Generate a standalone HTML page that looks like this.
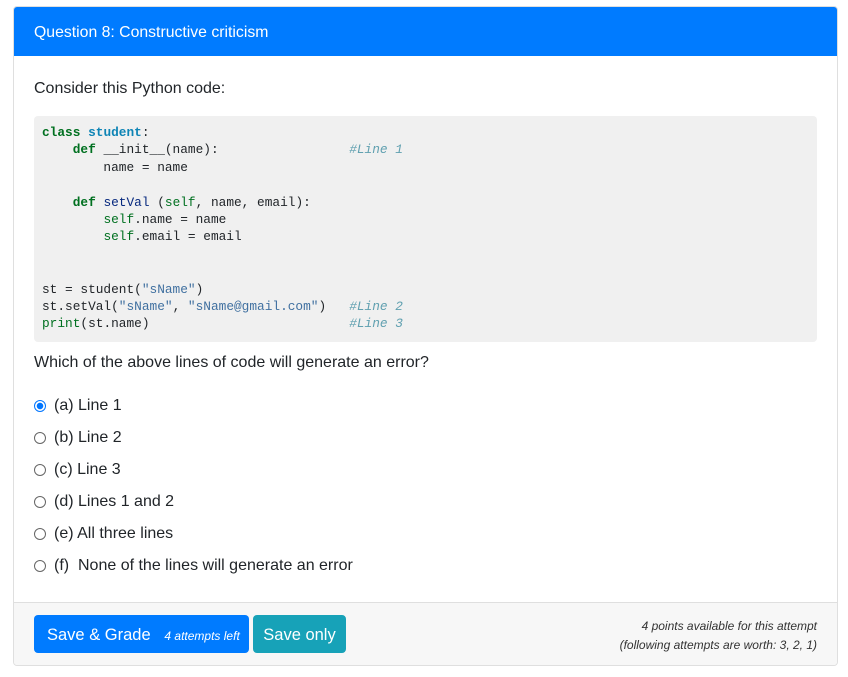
<!DOCTYPE html>
<html><head><meta charset="utf-8"><style>
body{margin:0;background:#fff;font-family:"Liberation Sans",sans-serif;color:#212529;}
.card{position:absolute;left:13px;top:6px;width:823px;height:658px;border:1px solid #dfdfdf;border-radius:4px;overflow:hidden;}
.hdr{height:49px;background:#007bff;color:#fff;font-size:15.8px;line-height:51px;padding-left:20px;}
.t{position:absolute;left:20px;font-size:16px;}
pre{position:absolute;left:20px;top:109px;width:783px;height:226px;margin:0;background:#f0f0f0;border-radius:4px;font-family:"Liberation Mono",monospace;font-size:12.8px;line-height:17.4px;padding:8px 0 0 8px;box-sizing:border-box;color:#212529;}
.k{color:#007020;font-weight:bold}.c{color:#0e84b5;font-weight:bold}.s{color:#4070a0}.g{color:#007020}.b{color:#06287e}.m{color:#60a0b0;font-style:italic}
.r{position:absolute;left:20px;font-size:16px;display:flex;align-items:center;}
.r i{display:inline-block;width:12px;height:12px;border:1px solid #666;border-radius:50%;margin-right:8px;box-sizing:border-box;}
.r i.on{border:1px solid #0075ff;background:radial-gradient(circle,#0075ff 3px,#fff 3.5px);}
.ft{position:absolute;left:0;top:595px;width:100%;height:63px;background:#f7f7f7;border-top:1px solid #dfdfdf;}
.btn{position:absolute;top:12px;height:38px;border-radius:4px;color:#fff;font-size:16.5px;line-height:40px;}
.info{position:absolute;right:20px;top:14px;text-align:right;font-size:12px;font-style:italic;line-height:19px;color:#333}
</style></head><body>
<div class="card">
<div class="hdr">Question 8: Constructive criticism</div>
<div class="t" style="top:73px">Consider this Python code:</div>
<pre><span class="k">class</span> <span class="c">student</span>:
    <span class="k">def</span> __init__(name):                 <span class="m">#Line 1</span>
        name = name

    <span class="k">def</span> <span class="b">setVal</span> (<span class="g">self</span>, name, email):
        <span class="g">self</span>.name = name
        <span class="g">self</span>.email = email


st = student(<span class="s">"sName"</span>)
st.setVal(<span class="s">"sName"</span>, <span class="s">"sName@gmail.com"</span>)   <span class="m">#Line 2</span>
<span class="g">print</span>(st.name)                          <span class="m">#Line 3</span></pre>
<div class="t" style="top:347px">Which of the above lines of code will generate an error?</div>
<div class="r" style="top:390px"><i class="on"></i>(a) Line 1</div>
<div class="r" style="top:422px"><i></i>(b) Line 2</div>
<div class="r" style="top:454px"><i></i>(c) Line 3</div>
<div class="r" style="top:486px"><i></i>(d) Lines 1 and 2</div>
<div class="r" style="top:518px"><i></i>(e) All three lines</div>
<div class="r" style="top:550px"><i></i>(f)&nbsp; None of the lines will generate an error</div>
<div class="ft">
<div class="btn" style="left:20px;width:215px;background:#007bff;padding-left:13px;box-sizing:border-box">Save &amp; Grade&nbsp;&nbsp; <span style="font-size:12px;font-style:italic">4 attempts left</span></div>
<div class="btn" style="left:239px;width:93px;background:#17a2b8;text-align:center">Save only</div>
<div class="info">4 points available for this attempt<br>(following attempts are worth: 3, 2, 1)</div>
</div>
</div>
</body></html>
